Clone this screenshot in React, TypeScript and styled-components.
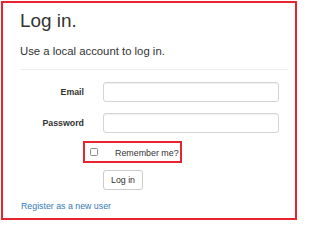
import React from "react";
import styled, { createGlobalStyle } from "styled-components";

const GlobalStyle = createGlobalStyle`
  html, body {
    margin: 0;
    padding: 0;
    background: #ffffff;
  }
  body {
    font-family: "Liberation Sans", Arial, sans-serif;
    color: #333333;
  }
`;

const Frame = styled.div`
  box-sizing: border-box;
  margin: 1px 0 0 1px;
  width: 296px;
  height: 219px;
  border: 2px solid #e8252d;
  padding: 0 7px 0 17px;
  display: flex;
  flex-direction: column;
`;

const Title = styled.h2`
  margin: 7.5px 0 0 0;
  font-size: 18.9px;
  line-height: 20.8px;
  font-weight: 400;
  color: #333333;
`;

const Subtitle = styled.h4`
  margin: 13.5px 0 0 0;
  font-size: 11.34px;
  line-height: 12.5px;
  font-weight: 400;
  color: #333333;
`;

const Rule = styled.hr`
  margin: 11.7px 0 0 0;
  border: 0;
  border-top: 1px solid #eeeeee;
  height: 0;
`;

const Form = styled.form`
  display: flex;
  flex-direction: column;
`;

const FieldRow = styled.div<{ $top: number }>`
  display: grid;
  grid-template-columns: 64px 176px;
  column-gap: 19px;
  align-items: center;
  margin-top: ${(p) => p.$top}px;
`;

const Label = styled.label`
  font-size: 8.8px;
  font-weight: 700;
  text-align: right;
  color: #333333;
`;

const Input = styled.input`
  box-sizing: border-box;
  height: 20px;
  width: 176px;
  margin: 0;
  border: 1px solid #d4d4d4;
  border-radius: 3px;
  box-shadow: inset 0 1px 1px rgba(0, 0, 0, 0.06);
  background: #ffffff;
  outline: none;
`;

const RememberBox = styled.div`
  box-sizing: border-box;
  margin: 8px 0 0 63px;
  width: 99px;
  height: 22px;
  border: 2px solid #e8252d;
  display: flex;
  align-items: center;
  padding-left: 5px;
  gap: 17px;
`;

const Check = styled.input`
  appearance: none;
  -webkit-appearance: none;
  box-sizing: border-box;
  margin: 1px 0 0 0;
  width: 8px;
  height: 8px;
  border: 1px solid #8c8c8c;
  border-radius: 1.5px;
  background: #ffffff;
`;

const CheckText = styled.span`
  font-size: 8.9px;
  color: #333333;
  padding-top: 2px;
`;

const Button = styled.button`
  box-sizing: border-box;
  margin: 7px 0 0 83px;
  align-self: flex-start;
  width: 40px;
  height: 20px;
  padding: 0;
  border: 1px solid #cccccc;
  border-radius: 3px;
  background: #ffffff;
  font-family: "Liberation Sans", Arial, sans-serif;
  font-size: 8.8px;
  color: #333333;
`;

const RegisterLink = styled.a`
  margin-top: 9.7px;
  align-self: flex-start;
  font-size: 8.8px;
  line-height: 12.6px;
  color: #337ab7;
  text-decoration: none;
  padding-left: 1px;
`;

export default function App() {
  return (
    <>
      <GlobalStyle />
      <Frame>
        <Title>Log in.</Title>
        <Subtitle>Use a local account to log in.</Subtitle>
        <Rule />
        <Form onSubmit={(e) => e.preventDefault()}>
          <FieldRow $top={12}>
            <Label htmlFor="email">Email</Label>
            <Input id="email" type="text" />
          </FieldRow>
          <FieldRow $top={11}>
            <Label htmlFor="password">Password</Label>
            <Input id="password" type="password" />
          </FieldRow>
          <RememberBox>
            <Check type="checkbox" id="remember" />
            <CheckText>Remember me?</CheckText>
          </RememberBox>
          <Button type="submit">Log in</Button>
        </Form>
        <RegisterLink href="#">Register as a new user</RegisterLink>
      </Frame>
    </>
  );
}
